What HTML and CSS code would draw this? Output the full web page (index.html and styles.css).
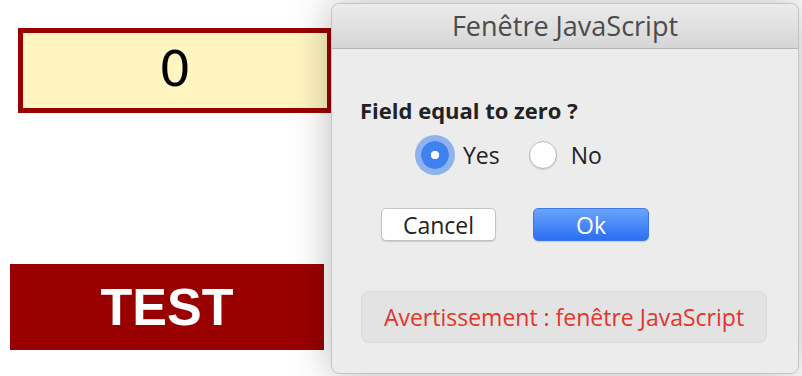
FILE: index.html
```html
<!DOCTYPE html>
<html lang="fr">
<head>
    <meta charset="UTF-8">
    <title>Test JavaScript</title>
    <link rel="stylesheet" href="styles.css">
</head>
<body>
    <div class="page">
        <div class="field">0</div>
        <button class="test-btn">TEST</button>
    </div>

    <div class="dialog">
        <div class="dialog-title">Fenêtre JavaScript</div>
        <div class="dialog-body">
            <p class="question">Field equal to zero ?</p>
            <div class="choices">
                <label class="choice"><input type="radio" name="answer" checked> Yes</label>
                <label class="choice"><input type="radio" name="answer"> No</label>
            </div>
            <div class="actions">
                <button class="btn">Cancel</button>
                <button class="btn btn-primary">Ok</button>
            </div>
            <div class="warning">Avertissement : fenêtre JavaScript</div>
        </div>
    </div>
</body>
</html>
```

FILE: styles.css
```css
body {
    margin: 0;
    background-color: #ffffff;
    font-family: 'Open Sans', Roboto, Arial, sans-serif;
    overflow: hidden;
}
.page {
    display: flex;
    flex-direction: column;
    align-items: flex-start;
    padding: 28px 0 0 10px;
}
.field {
    margin-left: 8px;
    width: 314px;
    height: 85px;
    box-sizing: border-box;
    border: 5px solid #990000;
    background-color: #fff5c1;
    font-family: 'DejaVu Sans', sans-serif;
    font-size: 50px;
    line-height: 73px;
    text-align: center;
    color: #000000;
}
.test-btn {
    margin-top: 151px;
    width: 314px;
    height: 86px;
    border: none;
    background-color: #990000;
    color: #ffffff;
    font-family: 'Liberation Sans', Arial, sans-serif;
    font-weight: bold;
    font-size: 52px;
    padding: 0;
}
.dialog {
    position: absolute;
    left: 331px;
    top: 3px;
    width: 468px;
    height: 371px;
    box-sizing: border-box;
    border: 1px solid #c4c4c4;
    border-radius: 8px;
    background-color: #ececec;
    box-shadow: 0 0 40px rgba(0, 0, 0, 0.28);
}
.dialog-title {
    height: 44px;
    line-height: 44px;
    text-align: center;
    font-size: 27px;
    color: #4b4b4b;
    background: linear-gradient(#ececec, #d6d6d6);
    border-bottom: 1px solid #b5b5b5;
    border-radius: 8px 8px 0 0;
}
.dialog-body {
    padding: 48px 0 0 28px;
}
.question {
    margin: 0;
    font-size: 22px;
    line-height: 26px;
    font-weight: bold;
    color: #222222;
}
.choices {
    display: flex;
    align-items: center;
    gap: 29px;
    margin: 18px 0 0 61px;
    height: 28px;
}
.choice {
    display: flex;
    align-items: center;
    gap: 14px;
    font-size: 23px;
    color: #222222;
}
.choice input {
    appearance: none;
    margin: 0;
    width: 28px;
    height: 28px;
    border-radius: 50%;
    border: 1px solid #b8b8b8;
    background-color: #ffffff;
    box-shadow: 0 1px 1px rgba(0, 0, 0, 0.1);
}
.choice input:checked {
    border: none;
    background: radial-gradient(circle, #ffffff 4px, #3e82f2 4.5px);
    box-shadow: 0 0 0 6px #8fb2ef;
}
.actions {
    display: flex;
    gap: 37px;
    margin: 39px 0 0 21px;
}
.btn {
    width: 115px;
    height: 33px;
    border: 1px solid #c2c2c2;
    border-radius: 5px;
    background-color: #ffffff;
    box-shadow: 0 1px 1px rgba(0, 0, 0, 0.15);
    font-family: inherit;
    font-size: 23px;
    line-height: 30px;
    color: #222222;
    padding: 0;
}
.btn-primary {
    width: 116px;
    border-color: #3b78e8;
    background: linear-gradient(#6aa4fa, #2a6ff5);
    color: #ffffff;
}
.warning {
    margin: 50px 0 0 1px;
    width: 406px;
    height: 52px;
    box-sizing: border-box;
    border: 1px solid #dadada;
    border-radius: 8px;
    background-color: #e3e3e3;
    color: #e5352a;
    font-size: 23px;
    line-height: 50px;
    text-align: center;
}
```
